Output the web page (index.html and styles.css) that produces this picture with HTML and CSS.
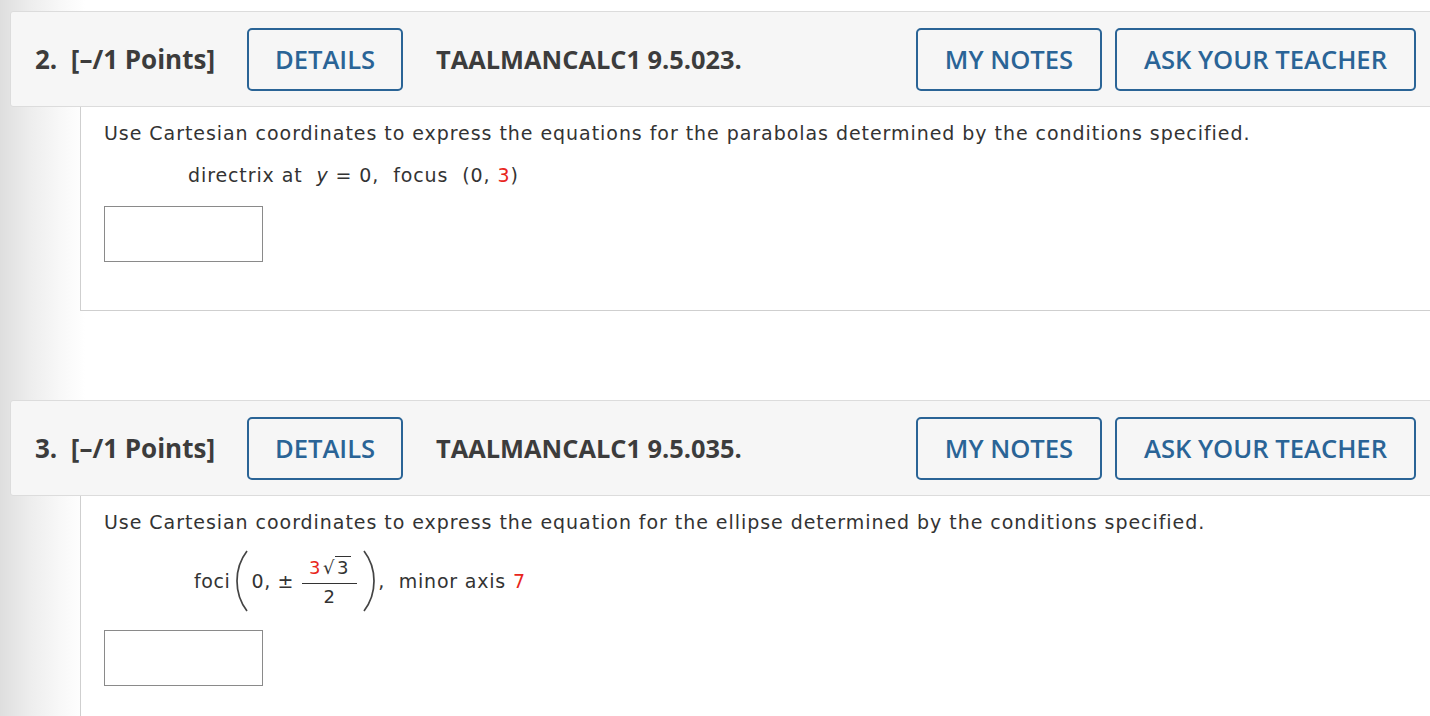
FILE: index.html
```html
<!DOCTYPE html>
<html lang="en">

<head>
  <meta charset="UTF-8">
  <title>Assignment</title>
  <link rel="stylesheet" href="styles.css">
</head>

<body>

  <!-- Question 2 -->
  <div class="question">
    <div class="q-header">
      <span class="q-points">2.&nbsp; [–/1 Points]</span>
      <button class="q-btn details-btn">DETAILS</button>
      <span class="q-code">TAALMANCALC1 9.5.023.</span>
      <button class="q-btn notes-btn">MY NOTES</button>
      <button class="q-btn teacher-btn">ASK YOUR TEACHER</button>
    </div>
    <div class="q-body">
      <p class="q-text">Use Cartesian coordinates to express the equations for the parabolas determined by the conditions specified.</p>
      <p class="q-given">directrix at &nbsp;<i>y</i> = 0, &nbsp;focus &nbsp;(0, <span class="red">3</span>)</p>
      <input class="answer-box" type="text">
    </div>
  </div>

  <!-- Question 3 -->
  <div class="question last">
    <div class="q-header">
      <span class="q-points">3.&nbsp; [–/1 Points]</span>
      <button class="q-btn details-btn">DETAILS</button>
      <span class="q-code">TAALMANCALC1 9.5.035.</span>
      <button class="q-btn notes-btn">MY NOTES</button>
      <button class="q-btn teacher-btn">ASK YOUR TEACHER</button>
    </div>
    <div class="q-body">
      <p class="q-text">Use Cartesian coordinates to express the equation for the ellipse determined by the conditions specified.</p>
      <div class="q-foci">
        <span>foci</span>
        <svg class="paren" width="16" height="62" viewBox="0 0 16 62"><path d="M13 1 Q3 14 3 31 Q3 48 13 61" fill="none" stroke="#444" stroke-width="1.7"/></svg>
        <span>0, ±</span>
        <span class="frac">
          <span class="frac-num"><span class="red">3</span><span class="sqrt">√</span><span class="radicand">3</span></span>
          <span class="frac-den">2</span>
        </span>
        <svg class="paren" width="16" height="62" viewBox="0 0 16 62"><path d="M3 1 Q13 14 13 31 Q13 48 3 61" fill="none" stroke="#444" stroke-width="1.7"/></svg>
        <span class="after-paren">, &nbsp;minor axis <span class="red">7</span></span>
      </div>
      <input class="answer-box foci-answer" type="text">
    </div>
  </div>

</body>

</html>
```

FILE: styles.css
```css
body {
  margin: 0;
  padding-top: 11px;
  height: 705px;
  overflow: hidden;
  font-family: "DejaVu Sans", Verdana, sans-serif;
  color: #333;
  background: linear-gradient(to right, #dedede 0, #ededed 30px, #f8f8f8 60px, #fff 85px);
}

.question {
  margin-left: 10px;
  width: 1432px;
  margin-bottom: 89px;
}

.q-header {
  display: flex;
  align-items: center;
  height: 94px;
  padding: 0 25px 0 24px;
  background-color: #f6f6f6;
  border: 1px solid #dcdcdc;
  border-radius: 3px;
  font-family: "Open Sans", sans-serif;
  color: #3c3c3c;
}

.q-points {
  font-size: 26px;
  font-weight: 700;
  margin-right: 32px;
}

.q-code {
  font-size: 25.4px;
  font-weight: 700;
  margin-left: 33px;
}

.q-btn {
  height: 63px;
  padding: 0;
  font-family: "Open Sans", sans-serif;
  font-size: 25.6px;
  font-weight: 600;
  color: #2a6496;
  background-color: transparent;
  border: 2px solid #2a6496;
  border-radius: 5px;
  cursor: pointer;
}

.details-btn {
  width: 156px;
}

.notes-btn {
  width: 186px;
  margin-left: auto;
  margin-right: 13px;
}

.teacher-btn {
  width: 301px;
}

.q-body {
  margin-left: 70px;
  padding: 10px 0 48px 23px;
  border: 1px solid #cfcfcf;
  border-top: none;
  border-radius: 0 0 4px 0;
  background-color: #fff;
}

.q-text {
  margin: 0;
  font-size: 19px;
  line-height: 32px;
  letter-spacing: 0.95px;
}

.q-given {
  margin: 14px 0 0 84px;
  font-size: 19px;
  line-height: 24px;
  letter-spacing: 0.9px;
}

.red {
  color: #e8261c;
}

.answer-box {
  display: block;
  margin-top: 19px;
  width: 159px;
  height: 56px;
  box-sizing: border-box;
  border: 1px solid #8a8a8a;
  background: #fff;
}

.foci-answer {
  margin-top: 16px;
}

.q-foci {
  display: flex;
  align-items: center;
  margin: 10px 0 0 90px;
  font-size: 19px;
  letter-spacing: 0.6px;
  height: 66px;
}

.paren {
  margin: 0 1px 0 4px;
}

.after-paren {
  letter-spacing: 0.8px;
}

.frac {
  display: inline-flex;
  flex-direction: column;
  align-items: center;
  margin: 0 0 0 8px;
  font-size: 18px;
}

.frac-num {
  padding: 0 6px 0 7px;
  border-bottom: 1px solid #333;
  line-height: 30px;
}

.sqrt {
  margin-left: 2px;
}

.radicand {
  border-top: 1px solid #333;
  padding: 0 2px;
}

.frac-den {
  line-height: 26px;
}
```
